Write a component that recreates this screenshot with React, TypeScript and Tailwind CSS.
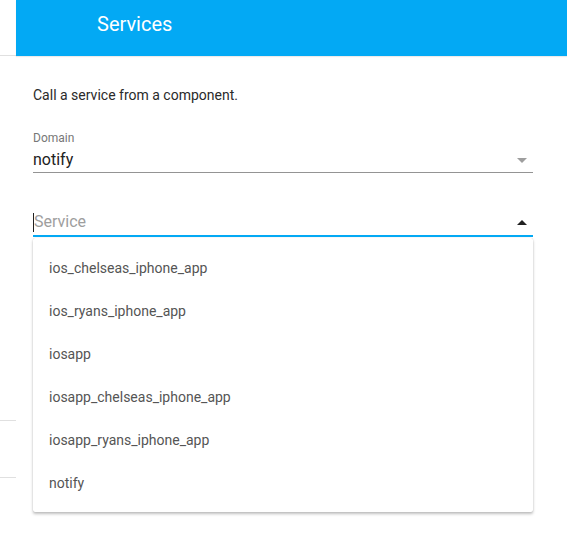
import React from 'react';

const services = [
  'ios_chelseas_iphone_app',
  'ios_ryans_iphone_app',
  'iosapp',
  'iosapp_chelseas_iphone_app',
  'iosapp_ryans_iphone_app',
  'notify',
];

export default function App() {
  return (
    <div
      className="flex w-[567px] h-[542px] bg-white overflow-hidden"
      style={{ fontFamily: 'Roboto, "Noto Sans", sans-serif' }}
    >
      {/* sidebar edge */}
      <div className="w-4 shrink-0 flex flex-col">
        <div className="h-[56px] border-b border-[#e0e0e0]" />
        <div className="h-[365px] border-b border-[#e0e0e0]" />
        <div className="h-[57px] border-b border-[#e0e0e0]" />
      </div>

      <div className="flex-1 flex flex-col">
        {/* toolbar */}
        <div className="h-[56px] bg-[#03a9f4] flex items-start pl-[81px] pt-[12px] shadow-[0_1px_1px_rgba(0,0,0,0.08)]">
          <span className="text-white text-[20px] leading-6">Services</span>
        </div>

        <div className="pl-[17px] pr-[34px] pt-[29px]">
          <p className="text-[14px] leading-5 text-[#2a2a2a]">Call a service from a component.</p>

          {/* domain */}
          <div className="mt-[26px] relative">
            <div className="text-[12px] leading-[14px] text-[#777]">Domain</div>
            <div className="flex items-center justify-between h-[24px] mt-[3px]">
              <span className="text-[16px] text-[#212121]">notify</span>
              <span className="mr-[6px] w-0 h-0 border-l-[5px] border-r-[5px] border-t-[5px] border-l-transparent border-r-transparent border-t-[#9e9e9e]" />
            </div>
            <div className="h-px bg-[#949494]" />
          </div>

          {/* service */}
          <div className="mt-[37px] relative">
            <div className="flex items-center justify-between h-[24px]">
              <span className="flex items-center text-[16px] text-[#9e9e9e]">
                <span className="w-px h-[19px] bg-[#212121]" />
                Service
              </span>
              <span className="mr-[6px] w-0 h-0 border-l-[5px] border-r-[5px] border-b-[5px] border-l-transparent border-r-transparent border-b-[#212121]" />
            </div>
            <div className="mt-px h-[2px] bg-[#03a9f4]" />

            <div className="absolute left-0 right-0 top-full mt-px bg-white py-2 shadow-[0_2px_3px_rgba(0,0,0,0.25),0_0_1px_rgba(0,0,0,0.2)] rounded-[2px]">
              {services.map((s) => (
                <div key={s} className="h-[43px] flex items-center pl-4 pt-px text-[14px] text-[#555]">
                  {s}
                </div>
              ))}
            </div>
          </div>
        </div>
      </div>
    </div>
  );
}
